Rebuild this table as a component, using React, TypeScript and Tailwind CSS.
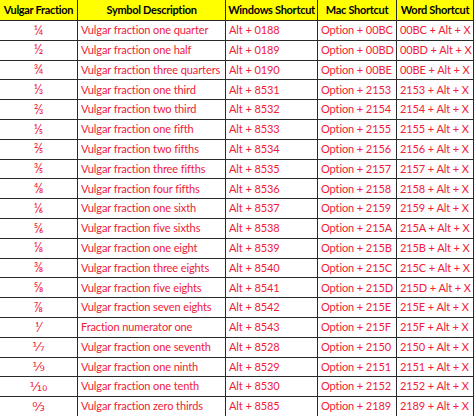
const rows: [string, string, string, string, string][] = [
  ["¼", "Vulgar fraction one quarter", "Alt + 0188", "Option + 00BC", "00BC + Alt + X"],
  ["½", "Vulgar fraction one half", "Alt + 0189", "Option + 00BD", "00BD + Alt + X"],
  ["¾", "Vulgar fraction three quarters", "Alt + 0190", "Option + 00BE", "00BE + Alt + X"],
  ["⅓", "Vulgar fraction one third", "Alt + 8531", "Option + 2153", "2153 + Alt + X"],
  ["⅔", "Vulgar fraction two third", "Alt + 8532", "Option + 2154", "2154 + Alt + X"],
  ["⅕", "Vulgar fraction one fifth", "Alt + 8533", "Option + 2155", "2155 + Alt + X"],
  ["⅖", "Vulgar fraction two fifths", "Alt + 8534", "Option + 2156", "2156 + Alt + X"],
  ["⅗", "Vulgar fraction three fifths", "Alt + 8535", "Option + 2157", "2157 + Alt + X"],
  ["⅘", "Vulgar fraction four fifths", "Alt + 8536", "Option + 2158", "2158 + Alt + X"],
  ["⅙", "Vulgar fraction one sixth", "Alt + 8537", "Option + 2159", "2159 + Alt + X"],
  ["⅚", "Vulgar fraction five sixths", "Alt + 8538", "Option + 215A", "215A + Alt + X"],
  ["⅛", "Vulgar fraction one eight", "Alt + 8539", "Option + 215B", "215B + Alt + X"],
  ["⅜", "Vulgar fraction three eights", "Alt + 8540", "Option + 215C", "215C + Alt + X"],
  ["⅝", "Vulgar fraction five eights", "Alt + 8541", "Option + 215D", "215D + Alt + X"],
  ["⅞", "Vulgar fraction seven eights", "Alt + 8542", "Option + 215E", "215E + Alt + X"],
  ["⅟", "Fraction numerator one", "Alt + 8543", "Option + 215F", "215F + Alt + X"],
  ["⅐", "Vulgar fraction one seventh", "Alt + 8528", "Option + 2150", "2150 + Alt + X"],
  ["⅑", "Vulgar fraction one ninth", "Alt + 8529", "Option + 2151", "2151 + Alt + X"],
  ["⅒", "Vulgar fraction one tenth", "Alt + 8530", "Option + 2152", "2152 + Alt + X"],
  ["↉", "Vulgar fraction zero thirds", "Alt + 8585", "Option + 2189", "2189 + Alt + X"],
];

const headers = ["Vulgar Fraction", "Symbol Description", "Windows Shortcut", "Mac Shortcut", "Word Shortcut"];
const widths = ["w-[78px]", "w-[148px]", "w-[92px]", "w-[79px]", "w-[77px]"];

export default function App() {
  return (
    <div className="w-[474px] h-[416px] overflow-hidden bg-white font-['Lato','DejaVu_Sans',sans-serif]">
      <div className="flex h-[21px] bg-[#ffff00]">
        {headers.map((h, i) => (
          <div
            key={h}
            className={`${widths[i]} shrink-0 overflow-hidden whitespace-nowrap border-r border-b border-[#2a2a2a] flex items-center justify-center text-[11px] tracking-[-0.3px] font-bold text-black`}
          >
            {h}
          </div>
        ))}
      </div>
      {rows.map((r) => (
        <div key={r[1]} className="flex h-[19.8px]">
          {r.map((c, i) => (
            <div
              key={i}
              className={`${widths[i]} shrink-0 overflow-hidden whitespace-nowrap border-r border-b border-[#2a2a2a] flex items-center text-[#ef2038] ${
                i === 0 ? "justify-center text-[13px]" : "pl-[3px] text-[11px] tracking-[-0.1px]"
              }`}
            >
              {c}
            </div>
          ))}
        </div>
      ))}
    </div>
  );
}
